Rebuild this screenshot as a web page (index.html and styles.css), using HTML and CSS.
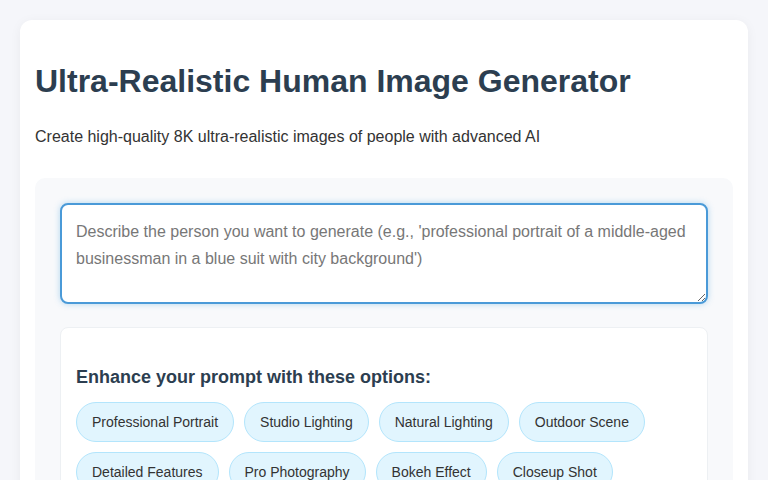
FILE: index.html
```html
<!DOCTYPE html>
<html lang="en">
  <head>
    <meta charset="UTF-8" />
    <title>Ultra-Realistic Human Image Generator</title>
    <link rel="stylesheet" href="styles.css">
  </head>
  <body>
    <div class="container">
      <h1>Ultra-Realistic Human Image Generator</h1>
      <p class="subtitle">Create high-quality 8K ultra-realistic images of people with advanced AI</p>

      <div class="generator">
        <textarea id="prompt" placeholder="Describe the person you want to generate (e.g., 'professional portrait of a middle-aged businessman in a blue suit with city background')" autofocus></textarea>

        <!-- prompt enhancers -->
        <div class="options">
          <h3>Enhance your prompt with these options:</h3>
          <div class="chips">
            <span class="chip">Professional Portrait</span>
            <span class="chip">Studio Lighting</span>
            <span class="chip">Natural Lighting</span>
            <span class="chip">Outdoor Scene</span>
            <span class="chip">Detailed Features</span>
            <span class="chip">Pro Photography</span>
            <span class="chip">Bokeh Effect</span>
            <span class="chip">Closeup Shot</span>
          </div>
        </div>
      </div>
    </div>
  </body>
</html>
```

FILE: styles.css
```css
body {
  font-family: 'Liberation Sans', Arial, sans-serif;
  background-color: #f5f6fa;
  color: #333;
  padding: 20px;
  margin: 0;
}

.container {
  background: white;
  border-radius: 12px;
  box-shadow: 0 2px 12px rgba(0, 0, 0, 0.05);
  padding: 43px 15px 20px;
}

h1 {
  font-size: 32px;
  color: #2c3e50;
  margin: 0 0 28px;
}

.subtitle {
  font-size: 16px;
  margin: 0 0 32px;
}

.generator {
  background-color: #f8f9fb;
  border-radius: 10px;
  padding: 25px;
}

textarea {
  display: block;
  box-sizing: border-box;
  width: 100%;
  height: 101px;
  padding: 13px 14px;
  font-family: inherit;
  font-size: 16px;
  line-height: 27px;
  color: #333;
  border: 2px solid #4a9ad8;
  border-radius: 8px;
  box-shadow: 0 0 6px rgba(52, 152, 219, 0.35);
  outline: none;
}

textarea::placeholder {
  color: #777;
}

.options {
  margin-top: 23px;
  background: white;
  border: 1px solid #edf0f3;
  border-radius: 8px;
  padding: 39px 15px 15px;
}

.options h3 {
  font-size: 18px;
  color: #2c3e50;
  margin: 0 0 14px;
}

.chips {
  display: flex;
  flex-wrap: wrap;
  gap: 10px;
}

.chip {
  background-color: #e1f5fe;
  border: 1px solid #b3e5fc;
  border-radius: 20px;
  padding: 11px 15px;
  font-size: 14px;
  color: #333;
  cursor: pointer;
}
```
